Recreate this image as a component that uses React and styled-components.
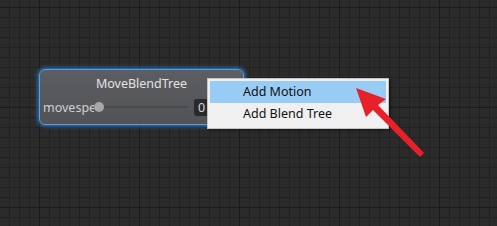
import React from 'react'
import styled, { createGlobalStyle } from 'styled-components'

const GlobalStyle = createGlobalStyle`
  html, body {
    margin: 0;
    padding: 0;
    background: #2a2a2a;
    overflow: hidden;
  }
`

const Canvas = styled.div`
  position: relative;
  width: 497px;
  height: 226px;
  overflow: hidden;
  background-color: #2b2b2b;
  background-image:
    linear-gradient(to right, #1b1b1b 1px, transparent 1px),
    linear-gradient(to bottom, #1b1b1b 1px, transparent 1px),
    linear-gradient(to right, #222222 1px, transparent 1px),
    linear-gradient(to bottom, #222222 1px, transparent 1px);
  background-size: 100px 100px, 100px 100px, 10px 10px, 10px 10px;
  background-position: 39px 7px, 39px 7px, 9px 7px, 9px 7px;
  font-family: 'Noto Sans', 'DejaVu Sans', sans-serif;
`

const Node = styled.div`
  position: absolute;
  left: 39px;
  top: 69px;
  width: 205px;
  height: 56px;
  box-sizing: border-box;
  border-radius: 6px;
  border: 1px solid #4aa3f0;
  background: linear-gradient(to bottom, #5d5e61, #525356);
  box-shadow: 0 0 4px 1px rgba(60, 140, 230, 0.85);
  display: flex;
  flex-direction: column;
  overflow: hidden;
`

const Title = styled.div`
  height: 26px;
  padding-top: 2px;
  box-sizing: border-box;
  text-align: center;
  color: #e2e2e2;
  font-size: 12.5px;
  line-height: 24px;
`

const ParamRow = styled.div`
  display: flex;
  align-items: center;
  height: 22px;
  padding-left: 3px;
`

const ParamLabel = styled.div`
  width: 51px;
  overflow: hidden;
  white-space: nowrap;
  color: #d0d0d0;
  font-size: 12.5px;
`

const Slider = styled.div`
  position: relative;
  width: 96px;
  height: 10px;
  display: flex;
  align-items: center;
  &:before {
    content: '';
    position: absolute;
    left: 2px;
    right: 2px;
    height: 2px;
    background: #4a4a4c;
  }
`

const Knob = styled.div`
  position: relative;
  width: 10px;
  height: 10px;
  border-radius: 50%;
  background: #a8a8a8;
`

const NumberField = styled.div`
  margin-left: 4px;
  width: 40px;
  height: 17px;
  border-radius: 3px;
  background: #2a2a2a;
  color: #d8d8d8;
  font-size: 12.5px;
  line-height: 17px;
  padding-left: 4px;
  box-sizing: border-box;
`

const Menu = styled.div`
  position: absolute;
  left: 207px;
  top: 78px;
  width: 182px;
  box-sizing: border-box;
  padding: 2px;
  background: #f0f0f0;
  border: 1px solid #c4c4c4;
  box-shadow: 2px 2px 2px rgba(0, 0, 0, 0.35);
`

const MenuItem = styled.div`
  height: ${p => (p.$h ? p.$h : 22)}px;
  line-height: 22px;
  padding-left: 33px;
  font-size: 12.5px;
  color: #101010;
  background: ${p => (p.$active ? '#99ccf5' : 'transparent')};
`

const Arrow = styled.svg`
  position: absolute;
  left: 0;
  top: 0;
  pointer-events: none;
`

export default function App() {
  return (
    <>
      <GlobalStyle />
      <Canvas>
        <Node>
          <Title>MoveBlendTree</Title>
          <ParamRow>
            <ParamLabel>movespe</ParamLabel>
            <Slider>
              <Knob />
            </Slider>
            <NumberField>0</NumberField>
          </ParamRow>
        </Node>
        <Menu>
          <MenuItem $active>Add Motion</MenuItem>
          <MenuItem $h={23}>Add Blend Tree</MenuItem>
        </Menu>
        <Arrow width="497" height="226" viewBox="0 0 497 226">
          <polygon
            points="356,88 386,99 378,105 424,153 420,157 373,110 366,117"
            fill="#e8202a"
          />
        </Arrow>
      </Canvas>
    </>
  )
}
